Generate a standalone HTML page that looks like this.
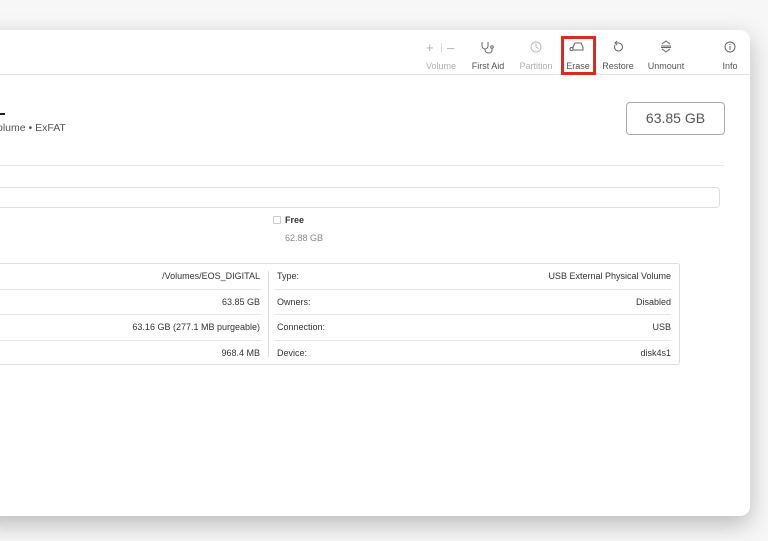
<!DOCTYPE html>
<html><head><style>
body{margin:0;width:768px;height:541px;background:#f7f7f7;font-family:"Liberation Sans",sans-serif;position:relative;overflow:hidden}
.win{position:absolute;left:-20px;top:30px;width:770px;height:486px;background:#fff;border-radius:0 10px 10px 0;box-shadow:0 8px 24px rgba(0,0,0,.25)}
.tb{position:absolute;left:0;top:0;width:770px;height:44px;border-bottom:1px solid #e2e2e2}
.lab{position:absolute;top:31px;font-size:9px;color:#555;transform:translateX(-50%)}
.dis{color:#b0b0b0}
.t{position:absolute;font-size:9px;color:#333;white-space:nowrap}
.hr{position:absolute;height:1px;background:#e6e6e6}
</style></head><body>
<div class="win">
<div class="tb"></div>
</div>
<div style="position:absolute;left:426px;top:40px;font-size:13px;color:#b0b0b0">+</div>
<div style="position:absolute;left:441px;top:43px;width:1px;height:9px;background:#ddd"></div>
<div style="position:absolute;left:447px;top:40px;font-size:13px;color:#b0b0b0">–</div>
<div class="lab dis" style="left:441px;top:61px">Volume</div>
<svg style="position:absolute;left:480px;top:41px" width="16" height="13" viewBox="0 0 16 13" fill="none" stroke="#666" stroke-width="1"><path d="M2 1v4c0 2 2 3 3 3s3-1 3-3V1M5 8v1c0 2 2 3 4 3s3-1 3-3V7"/><circle cx="12" cy="6" r="1.3"/></svg>
<div class="lab" style="left:488px;top:61px">First Aid</div>
<svg style="position:absolute;left:530px;top:41px" width="12" height="12" viewBox="0 0 12 12" fill="none" stroke="#bbb"><circle cx="6" cy="6" r="5"/><path d="M6 2.5V6l2.5 1.5"/></svg>
<div class="lab dis" style="left:536px;top:61px">Partition</div>
<div style="position:absolute;left:561px;top:36px;width:29px;height:33px;border:3px solid #d92b1e"></div>
<svg style="position:absolute;left:569px;top:41px" width="16" height="11" viewBox="0 0 16 11" fill="none" stroke="#666"><path d="M4 6l2-4h6l2 4v3H4z"/><circle cx="2.5" cy="8" r="1.5"/></svg>
<div class="lab" style="left:578px;top:61px">Erase</div>
<svg style="position:absolute;left:612px;top:40px" width="12" height="13" viewBox="0 0 12 13" fill="none" stroke="#666"><path d="M3 5a4 4 0 1 0 3-2H4M5 1L3 3l2 2"/></svg>
<div class="lab" style="left:618px;top:61px">Restore</div>
<svg style="position:absolute;left:660px;top:40px" width="12" height="13" viewBox="0 0 12 13" fill="none" stroke="#666"><path d="M2 4l4-3 4 3M2 9l4 3 4-3M1 6h10M1 7.5h10"/></svg>
<div class="lab" style="left:666px;top:61px">Unmount</div>
<svg style="position:absolute;left:724px;top:41px" width="12" height="12" viewBox="0 0 12 12" fill="none" stroke="#666"><circle cx="6" cy="6" r="5"/><path d="M6 5v4M6 3v1"/></svg>
<div class="lab" style="left:730px;top:61px">Info</div>

<div style="position:absolute;left:0;top:113px;width:5px;height:2px;background:#222"></div>
<div class="t" style="left:-3px;top:122px;font-size:10.5px;color:#555">olume • ExFAT</div>
<div style="position:absolute;left:626px;top:102px;width:97px;height:31px;border:1px solid #aaa;border-radius:4px;font-size:14px;color:#555;text-align:center;line-height:31px">63.85 GB</div>
<div class="hr" style="left:0;top:165px;width:724px"></div>
<div style="position:absolute;left:-10px;top:187px;width:728px;height:19px;border:1px solid #ddd;border-radius:4px"></div>
<div style="position:absolute;left:273px;top:216px;width:6px;height:6px;border:1px solid #ccc;border-radius:1px"></div>
<div class="t" style="left:285px;top:215px;font-weight:bold">Free</div>
<div class="t" style="left:285px;top:233px;color:#888">62.88 GB</div>

<div style="position:absolute;left:-10px;top:263px;width:688px;height:100px;border:1px solid #ddd;border-radius:3px"></div>
<div style="position:absolute;left:268px;top:271px;width:1px;height:86px;background:#ddd"></div>
<div class="hr" style="left:0;top:289px;width:261px"></div>
<div class="hr" style="left:0;top:314px;width:261px"></div>
<div class="hr" style="left:0;top:340px;width:261px"></div>
<div class="hr" style="left:275px;top:289px;width:396px"></div>
<div class="hr" style="left:275px;top:314px;width:396px"></div>
<div class="hr" style="left:275px;top:340px;width:396px"></div>
<div class="t" style="right:508px;top:271px">/Volumes/EOS_DIGITAL</div>
<div class="t" style="right:508px;top:297px">63.85 GB</div>
<div class="t" style="right:508px;top:322px">63.16 GB (277.1 MB purgeable)</div>
<div class="t" style="right:508px;top:348px">968.4 MB</div>
<div class="t" style="left:277px;top:271px">Type:</div>
<div class="t" style="left:277px;top:297px">Owners:</div>
<div class="t" style="left:277px;top:322px">Connection:</div>
<div class="t" style="left:277px;top:348px">Device:</div>
<div class="t" style="right:97px;top:271px">USB External Physical Volume</div>
<div class="t" style="right:97px;top:297px">Disabled</div>
<div class="t" style="right:97px;top:322px">USB</div>
<div class="t" style="right:97px;top:348px">disk4s1</div>
</body></html>
